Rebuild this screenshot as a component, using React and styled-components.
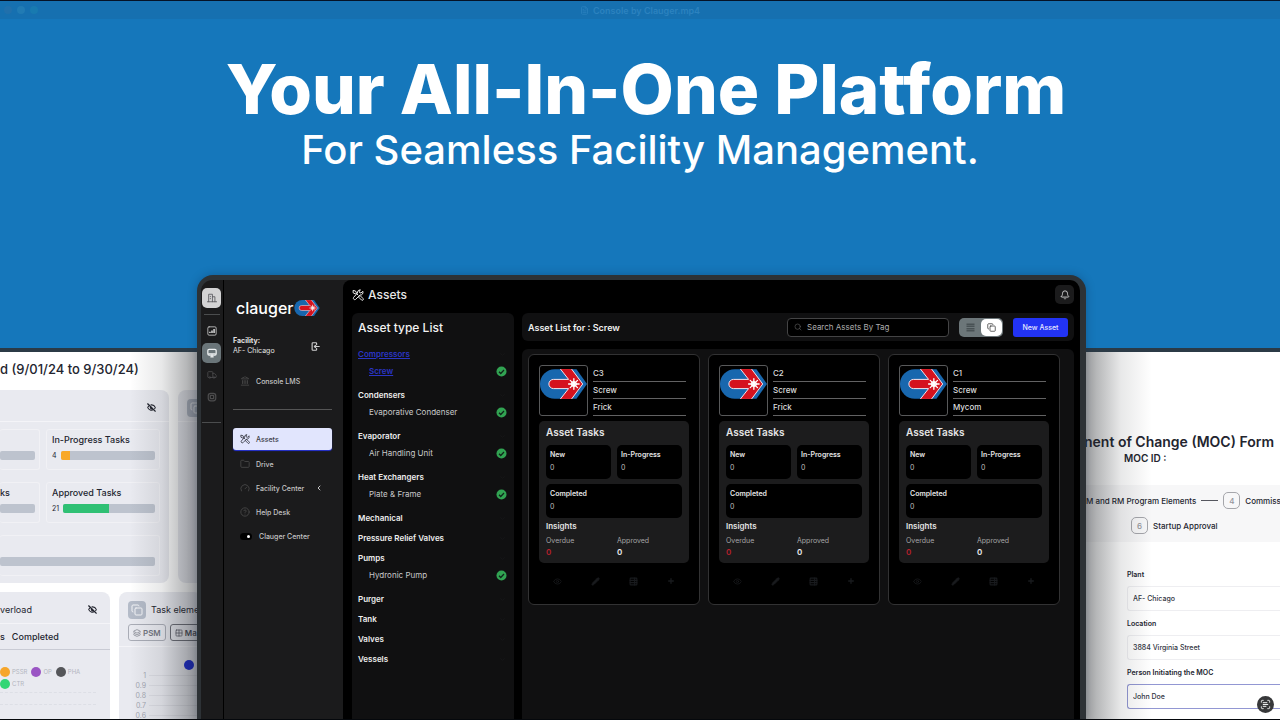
import React from "react";

import styled, { createGlobalStyle, css } from "styled-components";
import {
  Bell,
  ChevronDown,
  ChevronLeft,
  CircleHelp,
  Copy,
  Eye,
  EyeOff,
  FileText,
  Folder,
  Gauge,
  Grid2x2,
  Landmark,
  Layers,
  Pencil,
  Plus,
  ScanText,
  Search,
  TableProperties,
  Truck,
} from "lucide-react";

const GlobalStyle = createGlobalStyle`
  * {
    box-sizing: border-box;
  }

  body {
    margin: 0;
    font-family: Inter, "Liberation Sans", sans-serif;
  }

  button, input {
    font-family: inherit;
    margin: 0;
  }

  h1, h2, h3, h4, p, dl, dd, dt, ul {
    margin: 0;
    padding: 0;
    list-style: none;
  }

  svg {
    flex-shrink: 0;
  }
`;

const Page = styled.div`
  position: relative;
  display: flex;
  flex-direction: column;
  height: 100vh;
  overflow: hidden;
  background: #1577bb;
  border-top: 1px solid #051226;
  border-bottom: 1px solid #05080c;
`;

const TitleBar = styled.div`
  display: grid;
  grid-template-columns: 1fr auto 1fr;
  align-items: center;
  height: 18px;
  padding: 0 4px;
  background: #1670b0;
  color: #2c82bf;
  font-size: 9px;
  font-weight: 600;
`;

const Lights = styled.div`
  display: flex;
  gap: 5px;
`;

const Light = styled.span`
  width: 8px;
  height: 8px;
  border-radius: 50%;
  background: ${(props) => props.$color};
`;

const FileName = styled.div`
  display: flex;
  align-items: center;
  gap: 4px;
`;

const Hero = styled.header`
  flex: 0 0 256px;
  padding-top: 30px;
  text-align: center;
  color: #ffffff;
`;

const HeroTitle = styled.h1`
  padding-left: 12px;
  font-size: 69px;
  font-weight: 800;
  line-height: 80px;
  white-space: nowrap;
`;

const HeroSubtitle = styled.p`
  font-size: 40px;
  font-weight: 500;
  line-height: 42px;
  white-space: nowrap;
`;

const Stage = styled.div`
  flex: 1;
  min-height: 0;
  display: grid;
  grid-template-columns: 197fr 889fr 194fr;
`;

const Peek = styled.section`
  position: relative;
  min-width: 0;
  margin-top: 73px;
  overflow: hidden;
  background: #ffffff;
  border-top: 4px solid #2b3a46;
  color: #23252f;

  &::after {
    content: "";
    position: absolute;
    inset: 0;
    pointer-events: none;
    background: linear-gradient(
      to ${(props) => props.$shade},
      rgba(30, 34, 38, 0) 66%,
      rgba(30, 34, 38, 0.1) 82%,
      rgba(30, 34, 38, 0.42) 100%
    );
  }
`;

/* left screen */

const PeekHeading = styled.h2`
  padding: 8px 0 12px;
  font-size: 13px;
  font-weight: 500;
  line-height: 18px;
  white-space: nowrap;
`;

const PeekRow = styled.div`
  display: flex;
  gap: 9px;
  margin-bottom: 9px;
`;

const Tile = styled.article`
  flex: ${(props) => (props.$width ? `0 0 ${props.$width}px` : "1 0 78px")};
  min-height: ${(props) => props.$height}px;
  background: #e9eaf0;
  border-radius: ${(props) => (props.$open ? "0 8px 8px 0" : "8px")};
`;

const TileHead = styled.div`
  display: flex;
  align-items: center;
  justify-content: ${(props) => (props.$start ? "flex-start" : "space-between")};
  gap: 5px;
  height: ${(props) => props.$height}px;
  padding: 4px ${(props) => (props.$start ? 0 : 13)}px 0
    ${(props) => props.$left || 0}px;
  border-bottom: ${(props) => (props.$plain ? "0" : "1px solid #f4f4f8")};
  font-size: 9px;
  white-space: nowrap;
`;

const TileIcon = styled.span`
  display: flex;
  align-items: center;
  justify-content: center;
  width: 18px;
  height: 18px;
  flex-shrink: 0;
  border-radius: 4px;
  background: #b4bbc8;
  color: #f4f5f8;
`;

const StatGrid = styled.div`
  display: grid;
  grid-template-columns: 40px 1fr;
  gap: 12px 6px;
  padding: 7px 9px 0 0;
`;

const Stat = styled.div`
  grid-column: ${(props) => (props.$wide ? "1 / -1" : "auto")};
  height: 41px;
  padding: 3px 4px 0 ${(props) => (props.$cut ? 0 : 5)}px;
  border: 1px solid #f1f1f5;
  border-left-width: ${(props) => (props.$cut ? 0 : 1)}px;
  border-radius: 3px;
`;

const StatTitle = styled.h3`
  height: 14px;
  font-size: 9px;
  font-weight: 500;
  line-height: 14px;
  white-space: nowrap;
`;

const StatRow = styled.div`
  display: flex;
  align-items: center;
  gap: 4px;
  height: 16px;
  font-size: 7px;
`;

const Bar = styled.div`
  flex: 1;
  height: 9px;
  overflow: hidden;
  border-radius: 2px;
  background: #bdc3ce;
`;

const BarFill = styled.div`
  height: 100%;
  background: ${(props) => props.$color};
`;

const TabStrip = styled.div`
  display: flex;
  align-items: center;
  gap: 7px;
  height: 26px;
  border-bottom: 1px solid #c9cbd4;
  font-size: 9px;
  font-weight: 500;
`;

const Legend = styled.ul`
  display: flex;
  flex-wrap: wrap;
  gap: 2px 4px;
  padding: 17px 16px 0 0;
`;

const LegendItem = styled.li`
  display: flex;
  align-items: center;
  gap: 2px;
  color: #b3b6bf;
  font-size: 6px;
  line-height: 10px;
`;

const Dot = styled.span`
  width: 10px;
  height: 10px;
  flex-shrink: 0;
  border-radius: 50%;
  background: ${(props) => props.$color};
`;

const DashRule = styled.div`
  margin: 3px 14px 11px 0;
  border-top: 1px dashed #dddfe6;
`;

const Chips = styled.div`
  display: flex;
  gap: 4px;
  padding: 1px 0 5px 9px;
  border-bottom: 1px solid #f4f4f8;
`;

const Chip = styled.button`
  display: flex;
  align-items: center;
  gap: 2px;
  height: 17px;
  padding: 0 4px;
  border: 1px solid ${(props) => (props.$dark ? "#6d6f78" : "#a9acb6")};
  border-radius: 3px;
  background: transparent;
  color: ${(props) => (props.$dark ? "#4b4d57" : "#747782")};
  font-size: 8px;
  font-weight: 600;
`;

const ChartLegend = styled.div`
  display: flex;
  padding: 13px 0 0 65px;
`;

const AxisRow = styled.div`
  display: flex;
  align-items: center;
  gap: 3px;
  height: 10px;
  padding-left: 9px;
  color: #a5a8b2;
  font-size: 7px;

  span {
    width: 18px;
    text-align: right;
  }

  &::after {
    content: "";
    flex: 1;
    border-top: 1px solid #dcdde4;
  }
`;

/* right screen */

const FormTitle = styled.h2`
  display: flex;
  justify-content: flex-end;
  padding: 80px 6px 0 0;
  font-size: 14px;
  font-weight: 600;
  line-height: 20px;
  white-space: nowrap;
`;

const FormId = styled.p`
  padding-left: 38px;
  font-size: 10px;
  font-weight: 600;
  line-height: 12px;
`;

const Stepper = styled.div`
  margin-top: 21px;
  padding-top: 7px;
  height: 57px;
  background: #f7f7f8;
`;

const StepLine = styled.div`
  display: flex;
  align-items: center;
  gap: 5px;
  height: 17px;
  margin-bottom: 8px;
  padding-left: ${(props) => props.$left || 0}px;
  font-size: 8px;
  font-weight: 500;
  white-space: nowrap;
`;

const StepRule = styled.span`
  flex: 0 0 17px;
  height: 1px;
  background: #55575f;
`;

const StepNumber = styled.span`
  display: flex;
  align-items: center;
  justify-content: center;
  flex: 0 0 17px;
  height: 17px;
  border: 1px solid #a5a6ab;
  border-radius: 5px;
  color: #94959b;
`;

const Fields = styled.form`
  padding: 26px 0 0 41px;
`;

const Field = styled.label`
  display: block;
  margin-bottom: 6px;
  font-size: 7px;
  font-weight: 600;
  line-height: 14px;
`;

const FieldInput = styled.input`
  display: block;
  width: 100%;
  height: 25px;
  margin-top: 4px;
  padding: 0 5px;
  border: 1px solid ${(props) => (props.$active ? "#9297d3" : "#eeeef1")};
  border-right-width: 0;
  border-radius: 3px 0 0 3px;
  background: #ffffff;
  color: #33353f;
  font-size: 7px;
  font-weight: 500;
  outline: none;
`;

const ScanButton = styled.button`
  position: absolute;
  right: 6px;
  bottom: 6px;
  z-index: 2;
  display: flex;
  align-items: center;
  justify-content: center;
  width: 17px;
  height: 17px;
  padding: 0;
  border: 0;
  border-radius: 50%;
  background: #37383a;
  color: #ffffff;
`;

/* device */

const Device = styled.div`
  display: grid;
  grid-template-columns: 23px 119px minmax(0, 1fr);
  position: relative;
  z-index: 1;
  overflow: hidden;
  background: #1b1b1c;
  border: 0 solid #2d3236;
  border-width: 5px 6px 0 4px;
  border-radius: 16px 16px 0 0;
  box-shadow: 0 0 10px rgba(0, 20, 40, 0.25);
`;

const Rail = styled.nav`
  display: flex;
  flex-direction: column;
  align-items: center;
  padding: 8px 2px 0 1px;
  border-right: 1px solid #000000;
`;

const RailButton = styled.button`
  display: flex;
  align-items: center;
  justify-content: center;
  width: 19px;
  height: 20px;
  margin-bottom: 2px;
  padding: 0;
  border: 0;
  border-radius: 5px;
  background: ${(props) => props.$bg || "transparent"};
  color: ${(props) => props.$color};
`;

const RailRule = styled.div`
  width: ${(props) => props.$width}px;
  height: 1px;
  margin: ${(props) => props.$margin};
  background: #4b4d4e;
`;

const Sidebar = styled.aside`
  padding: 0 11px 0 9px;
`;

const Brand = styled.div`
  display: flex;
  align-items: center;
  gap: 1px;
  padding: 18px 0 0 3px;
  color: #ffffff;
  font-size: 16px;
  font-weight: 500;
  line-height: 20px;
`;

const Facility = styled.div`
  display: flex;
  align-items: center;
  justify-content: space-between;
  margin-bottom: 14px;
  padding: 18px 12px 0 0;
  color: #e2e2e2;
  font-size: 7px;
  line-height: 10px;
`;

const IconButton = styled.button`
  display: flex;
  padding: 0;
  border: 0;
  background: transparent;
  color: ${(props) => props.$color};
`;

const NavLink = styled.a`
  display: flex;
  align-items: center;
  gap: 6px;
  height: 22px;
  margin-bottom: 2px;
  padding: 0 9px 0 7px;
  border-radius: 3px;
  color: #c4c4c4;
  font-size: 7px;
  font-weight: 500;
  text-decoration: none;
  white-space: nowrap;

  svg:first-child {
    color: #4a4a4a;
  }

  svg:last-child {
    margin-left: auto;
  }

  ${(props) =>
    props.$active &&
    css`
      margin-bottom: 3px;
      background: #e1e5fd;
      box-shadow: 0 1px 1px #2733d8;
      color: #3c3d49;

      svg:first-child {
        color: #33343d;
        margin-left: 0;
      }
    `}
`;

const NavDivider = styled.div`
  height: 1px;
  margin: 17px 0 18px;
  background: #555555;
`;

const SwitchLabel = styled.label`
  display: flex;
  align-items: center;
  gap: 7px;
  height: 22px;
  padding-left: 7px;
  color: #c4c4c4;
  font-size: 7px;
  font-weight: 500;
`;

const SwitchInput = styled.input`
  appearance: none;
  display: flex;
  align-items: center;
  justify-content: flex-end;
  width: 12px;
  height: 7px;
  padding: 0 2px;
  border-radius: 4px;
  background: #000000;

  &::after {
    content: "";
    width: 3px;
    height: 3px;
    border-radius: 50%;
    background: #ffffff;
  }
`;

const Main = styled.main`
  display: flex;
  flex-direction: column;
  min-width: 0;
  padding: 0 6px 0 9px;
  background: #000000;
  border-radius: 8px 10px 0 0;
`;

const TopBar = styled.div`
  display: flex;
  align-items: center;
  gap: 4px;
  height: 29px;
  margin-bottom: 4px;
  color: #e6e6e6;
`;

const TopTitle = styled.h2`
  flex: 1;
  font-size: 12px;
  font-weight: 500;
  line-height: 16px;
`;

const BellButton = styled.button`
  display: flex;
  align-items: center;
  justify-content: center;
  width: 19px;
  height: 19px;
  padding: 0;
  border: 0;
  border-radius: 5px;
  background: #1b1b1c;
  color: #e6e6e6;
`;

const Columns = styled.div`
  flex: 1;
  display: grid;
  grid-template-columns: 162px minmax(0, 1fr);
  gap: 8px;
  min-height: 0;
`;

const TypePanel = styled.section`
  padding: 6px 6px 0;
  background: #101011;
  border-radius: 6px 6px 0 0;
`;

const TypeTitle = styled.h3`
  margin-bottom: 7px;
  color: #f2f2f2;
  font-size: 12px;
  font-weight: 500;
  line-height: 18px;
`;

const TypeHeader = styled.div`
  display: flex;
  align-items: center;
  justify-content: space-between;
  height: 20px;
  padding-right: 2px;
  color: ${(props) => (props.$active ? "#2b35c4" : "#eeeeee")};
  font-size: 8px;
  font-weight: 600;
  text-decoration: ${(props) => (props.$active ? "underline" : "none")};

  svg {
    color: #1c1c1d;
  }
`;

const TypeChild = styled.div`
  display: flex;
  align-items: center;
  justify-content: space-between;
  height: 14px;
  margin-bottom: 7px;
  padding: 0 1px 0 11px;
  color: ${(props) => (props.$active ? "#2b35c4" : "#c9c9c9")};
  font-size: 8px;
  font-weight: ${(props) => (props.$active ? 600 : 400)};
  text-decoration: ${(props) => (props.$active ? "underline" : "none")};
`;

const ListColumn = styled.section`
  display: flex;
  flex-direction: column;
  gap: 8px;
  min-width: 0;
`;

const ListHeader = styled.div`
  display: flex;
  align-items: center;
  gap: 10px;
  height: 28px;
  padding: 0 6px;
  background: #101011;
  border-radius: 6px;
`;

const ListTitle = styled.h3`
  flex: 1;
  color: #f0f0f0;
  font-size: 9px;
  font-weight: 600;
`;

const SearchBox = styled.label`
  display: flex;
  align-items: center;
  gap: 5px;
  width: 162px;
  height: 19px;
  padding: 0 6px;
  border: 1px solid #444445;
  border-radius: 4px;
  background: #000000;
  color: #5b5b5b;

  input {
    flex: 1;
    min-width: 0;
    padding: 0;
    border: 0;
    outline: none;
    background: transparent;
    color: #ffffff;
    font-size: 8px;
  }

  input::placeholder {
    color: #adadad;
  }
`;

const ViewToggle = styled.div`
  display: flex;
  height: 19px;
  padding: 1px;
  border-radius: 5px;
  background: #6c7679;
`;

const ViewButton = styled.button`
  display: flex;
  align-items: center;
  justify-content: center;
  width: 21px;
  padding: 0;
  border: 0;
  border-radius: 5px;
  background: ${(props) => (props.$on ? "#ffffff" : "transparent")};
  color: ${(props) => (props.$on ? "#333333" : "#485154")};
`;

const PrimaryButton = styled.button`
  width: 55px;
  height: 19px;
  padding: 0;
  border: 0;
  border-radius: 3px;
  background: #2233f5;
  color: #e6e8ff;
  font-size: 7px;
  font-weight: 500;
`;

const CardArea = styled.div`
  flex: 1;
  display: grid;
  grid-template-columns: repeat(3, minmax(0, 1fr));
  align-items: start;
  gap: 8px;
  padding: 5px 14px 0 6px;
  background: #101011;
  border-radius: 6px 6px 0 0;
`;

const Card = styled.article`
  padding: 10px 10px 18px;
  background: #000000;
  border: 1px solid #323233;
  border-radius: 6px;
`;

const CardTop = styled.div`
  display: flex;
  gap: 5px;
  margin-bottom: 5px;
  padding-right: 3px;
`;

const Thumb = styled.div`
  width: 49px;
  height: 51px;
  padding-top: 3px;
  border: 1px solid #58595a;
  border-radius: 3px;
`;

const Facts = styled.ul`
  flex: 1;
  display: grid;
  grid-template-rows: repeat(3, 1fr);
  color: #dcdcdc;
  font-size: 8px;
  font-weight: 500;

  li {
    display: flex;
    align-items: center;
    border-bottom: 1px solid #626263;
  }
`;

const Tasks = styled.div`
  padding: 4px 7px 5px;
  background: #1c1c1d;
  border-radius: 5px;
`;

const TasksTitle = styled.h4`
  margin-bottom: 6px;
  color: #e4e4e4;
  font-size: 10px;
  font-weight: 600;
  line-height: 14px;
`;

const TaskGrid = styled.div`
  display: grid;
  grid-template-columns: 1fr 1fr;
  gap: 5px 6px;
`;

const TaskBox = styled.div`
  grid-column: ${(props) => (props.$wide ? "1 / -1" : "auto")};
  height: 34px;
  padding: 3px 4px 0;
  background: #000000;
  border-radius: 5px;
  color: #bdbdbd;
  font-size: 7px;
  line-height: 14px;

  h5 {
    margin: 0;
    color: #e4e4e4;
    font-size: 7px;
    font-weight: 600;
    line-height: 13px;
  }
`;

const InsightsTitle = styled.h4`
  margin-top: 1px;
  color: #e4e4e4;
  font-size: 8px;
  font-weight: 600;
  line-height: 14px;
`;

const Insights = styled.dl`
  display: grid;
  grid-template-columns: 1fr 1fr;
  gap: 6px;
  padding-top: 2px;

  dt {
    color: #a5a5a6;
    font-size: 7px;
    line-height: 11px;
  }
`;

const InsightValue = styled.dd`
  color: ${(props) => (props.$alert ? "#b3202c" : "#ececec")};
  font-size: 8px;
  font-weight: 600;
  line-height: 12px;
`;

const CardActions = styled.div`
  display: flex;
  justify-content: space-between;
  padding: 14px 14px 0;
`;

const LogoMark = (props) => (
  <svg viewBox="0 0 143 90" {...props}>
    <path d="M45 0H111L143 45L111 90H45A45 45 0 0 1 45 0Z" fill="#1867ae" />
    <path
      d="M61 -2H95L130 45L95 92H61L87 59H41A14 14 0 0 1 41 31H87Z"
      fill="#d5121e"
      stroke="#f3e8ef"
      strokeWidth="3"
    />
    <g stroke="#ffffff" strokeWidth="4" strokeLinecap="round">
      <path d="M103 29V61M87 45H119M92 34L114 56M114 34L92 56" />
      <circle cx="103" cy="45" r="8" fill="none" strokeWidth="3" />
    </g>
  </svg>
);

const LineIcon = ({ size = 10, width = 2, children }) => (
  <svg
    width={size}
    height={size}
    viewBox="0 0 24 24"
    fill="none"
    stroke="currentColor"
    strokeWidth={width}
    strokeLinecap="round"
    strokeLinejoin="round"
  >
    {children}
  </svg>
);

const ToolsIcon = ({ size = 12 }) => (
  <LineIcon size={size}>
    <path d="M3 3l4 1 2 4-2 2-4-2zM9 9l3 3M14 15l2-2 6 6a2 2 0 0 1-3 3l-5-5z" />
    <path d="M21 5l-3 3-3-1-1-3 3-2a5 5 0 0 0-6 6L3 17a3 3 0 0 0 4 4l9-9a5 5 0 0 0 6-6z" />
  </LineIcon>
);

const TowerIcon = () => (
  <LineIcon>
    <path d="M4 21V3h9v18M13 9h6v12M1 21h22M8 8v1M8 13v1" />
  </LineIcon>
);

const ReportIcon = () => (
  <LineIcon>
    <rect x="2" y="2" width="20" height="20" rx="3" />
    <path d="M7 17v-3M12 17v-6M17 17V7" strokeWidth="4" strokeLinecap="butt" />
  </LineIcon>
);

const ScreenIcon = () => (
  <LineIcon width={3}>
    <rect x="2" y="3" width="20" height="14" rx="3" />
    <path d="M4 14h16M9 21h6M12 17v4" />
  </LineIcon>
);

const ChipIcon = () => (
  <LineIcon>
    <rect x="3" y="3" width="18" height="18" rx="6" strokeWidth="3" />
    <rect x="8" y="8" width="8" height="8" rx="1" strokeWidth="3" />
  </LineIcon>
);

const ExitIcon = () => (
  <LineIcon size={9} width={3}>
    <path d="M15 7V4a2 2 0 0 0-2-2H5a2 2 0 0 0-2 2v16a2 2 0 0 0 2 2h8a2 2 0 0 0 2-2v-3M22 12H9M12 9l-3 3 3 3" />
  </LineIcon>
);

const CheckBadge = () => (
  <svg width="11" height="11" viewBox="0 0 22 22">
    <circle cx="11" cy="11" r="10" fill="#31a352" />
    <path
      d="M6 11.500l3.500 3.500L16 8"
      fill="none"
      stroke="#10251a"
      strokeWidth="2.500"
    />
  </svg>
);

const ListIcon = () => (
  <svg width="9" height="9" viewBox="0 0 18 18" fill="currentColor">
    <path d="M1 1h16v3H1zM1 5h16v3H1zM1 10h16v3H1zM1 14h16v3H1z" />
  </svg>
);

const assetTypes = [
  { name: "Compressors", child: "Screw", active: true },
  { name: "Condensers", child: "Evaporative Condenser" },
  { name: "Evaporator", child: "Air Handling Unit" },
  { name: "Heat Exchangers", child: "Plate & Frame" },
  { name: "Mechanical" },
  { name: "Pressure Relief Valves" },
  { name: "Pumps", child: "Hydronic Pump" },
  { name: "Purger" },
  { name: "Tank" },
  { name: "Valves" },
  { name: "Vessels" },
];

const assets = [
  { tag: "C3", type: "Screw", maker: "Frick" },
  { tag: "C2", type: "Screw", maker: "Frick" },
  { tag: "C1", type: "Screw", maker: "Mycom" },
];

const legend = [
  { label: "PSSR", color: "#f6a62b" },
  { label: "OP", color: "#9a55c4" },
  { label: "PHA", color: "#55565a" },
  { label: "CTR", color: "#33d675" },
];

const Progress = ({ title, count, percent = 0, color, cut, wide }) => (
  <Stat $cut={cut} $wide={wide}>
    <StatTitle>{title}</StatTitle>
    <StatRow>
      {count}
      <Bar>
        <BarFill $color={color} style={{ width: `${percent}%` }} />
      </Bar>
    </StatRow>
  </Stat>
);

const DashboardPeek = () => (
  <Peek $shade="right">
    <PeekHeading>d (9/01/24 to 9/30/24)</PeekHeading>
    <PeekRow>
      <Tile $width={169} $height={193} $open>
        <TileHead $height={32}>
          <span />
          <EyeOff size={9} strokeWidth={3} />
        </TileHead>
        <StatGrid>
          <Progress cut />
          <Progress
            title="In-Progress Tasks"
            count={4}
            percent={10}
            color="#f8a827"
          />
          <Progress title="ks" cut />
          <Progress
            title="Approved Tasks"
            count={21}
            percent={50}
            color="#2fc074"
          />
          <Progress cut wide />
        </StatGrid>
      </Tile>
      <Tile $height={193}>
        <TileHead $height={32} $left={9} $start>
          <TileIcon>
            <Copy size={12} />
          </TileIcon>
        </TileHead>
      </Tile>
    </PeekRow>
    <PeekRow>
      <Tile $width={110} $height={140} $open>
        <TileHead $height={32}>
          verload
          <EyeOff size={9} strokeWidth={3} />
        </TileHead>
        <TabStrip>
          <span>s</span>
          <span>Completed</span>
        </TabStrip>
        <Legend>
          {legend.map((item) => (
            <LegendItem key={item.label}>
              <Dot $color={item.color} />
              {item.label}
            </LegendItem>
          ))}
        </Legend>
        <DashRule />
        <DashRule />
      </Tile>
      <Tile $height={140}>
        <TileHead $height={31} $left={9} $start $plain>
          <TileIcon>
            <Copy size={12} />
          </TileIcon>
          Task eleme
        </TileHead>
        <Chips>
          <Chip type="button">
            <Layers size={8} />
            PSM
          </Chip>
          <Chip type="button" $dark>
            <Grid2x2 size={8} />
            Ma
          </Chip>
        </Chips>
        <ChartLegend>
          <Dot $color="#1a2bd8" />
        </ChartLegend>
        {["1", "0.9", "0.8", "0.7", "0.6"].map((tick) => (
          <AxisRow key={tick}>
            <span>{tick}</span>
          </AxisRow>
        ))}
      </Tile>
    </PeekRow>
  </Peek>
);

const MocPeek = () => (
  <Peek $shade="left">
    <FormTitle>nent of Change (MOC) Form</FormTitle>
    <FormId>MOC ID :</FormId>
    <Stepper>
      <StepLine>
        M and RM Program Elements
        <StepRule />
        <StepNumber>4</StepNumber>
        Commissi
      </StepLine>
      <StepLine $left={45}>
        <StepNumber>6</StepNumber>
        Startup Approval
      </StepLine>
    </Stepper>
    <Fields>
      <Field>
        Plant
        <FieldInput type="text" defaultValue="AF- Chicago" />
      </Field>
      <Field>
        Location
        <FieldInput type="text" defaultValue="3884 Virginia Street" />
      </Field>
      <Field>
        Person Initiating the MOC
        <FieldInput type="text" defaultValue="John Doe" $active />
      </Field>
    </Fields>
    <ScanButton type="button" aria-label="Scan text">
      <ScanText size={11} />
    </ScanButton>
  </Peek>
);

const AssetCard = ({ asset }) => (
  <Card>
    <CardTop>
      <Thumb>
        <LogoMark width="47" height="30" />
      </Thumb>
      <Facts>
        <li>{asset.tag}</li>
        <li>{asset.type}</li>
        <li>{asset.maker}</li>
      </Facts>
    </CardTop>
    <Tasks>
      <TasksTitle>Asset Tasks</TasksTitle>
      <TaskGrid>
        <TaskBox>
          <h5>New</h5>0
        </TaskBox>
        <TaskBox>
          <h5>In-Progress</h5>0
        </TaskBox>
        <TaskBox $wide>
          <h5>Completed</h5>0
        </TaskBox>
      </TaskGrid>
      <InsightsTitle>Insights</InsightsTitle>
      <Insights>
        <div>
          <dt>Overdue</dt>
          <InsightValue $alert>0</InsightValue>
        </div>
        <div>
          <dt>Approved</dt>
          <InsightValue>0</InsightValue>
        </div>
      </Insights>
    </Tasks>
    <CardActions>
      <IconButton type="button" aria-label="View" $color="#191b1e">
        <Eye size={9} />
      </IconButton>
      <IconButton type="button" aria-label="Edit" $color="#191b1e">
        <Pencil size={9} fill="currentColor" />
      </IconButton>
      <IconButton type="button" aria-label="Details" $color="#191b1e">
        <TableProperties size={9} strokeWidth={3} />
      </IconButton>
      <IconButton type="button" aria-label="Add" $color="#191b1e">
        <Plus size={8} strokeWidth={4} />
      </IconButton>
    </CardActions>
  </Card>
);

const App = () => (
  <>
    <GlobalStyle />
    <Page>
      <TitleBar>
        <Lights>
          <Light $color="#2170ac" />
          <Light $color="#217bb4" />
          <Light $color="#187ab0" />
        </Lights>
        <FileName>
          <FileText size={9} />
          Console by Clauger.mp4
        </FileName>
      </TitleBar>
      <Hero>
        <HeroTitle>Your All-In-One Platform</HeroTitle>
        <HeroSubtitle>For Seamless Facility Management.</HeroSubtitle>
      </Hero>
      <Stage>
        <DashboardPeek />
        <Device>
          <Rail>
            <RailButton aria-label="Facilities" $bg="#d3d3d4" $color="#55565a">
              <TowerIcon />
            </RailButton>
            <RailRule $width={16} $margin="4px 0 6px" />
            <RailButton aria-label="Reports" $color="#c9c9c9">
              <ReportIcon />
            </RailButton>
            <RailButton aria-label="Console" $bg="#6a7579" $color="#eef1f2">
              <ScreenIcon />
            </RailButton>
            <RailButton aria-label="Deliveries" $color="#4c4c4d">
              <Truck size={10} />
            </RailButton>
            <RailButton aria-label="Devices" $color="#4c4c4d">
              <ChipIcon />
            </RailButton>
            <RailRule $width={19} $margin="13px 0 0" />
          </Rail>
          <Sidebar>
            <Brand>
              clauger
              <LogoMark width="26" height="16" />
            </Brand>
            <Facility>
              <div>
                <strong>Facility:</strong>
                <div>AF- Chicago</div>
              </div>
              <IconButton aria-label="Change facility" $color="#cfcfcf">
                <ExitIcon />
              </IconButton>
            </Facility>
            <NavLink href="#lms">
              <Landmark size={10} />
              <span>Console LMS</span>
            </NavLink>
            <NavDivider />
            <NavLink href="#assets" $active>
              <ToolsIcon size={10} />
              <span>Assets</span>
            </NavLink>
            <NavLink href="#drive">
              <Folder size={10} />
              <span>Drive</span>
            </NavLink>
            <NavLink href="#facility">
              <Gauge size={10} />
              <span>Facility Center</span>
              <ChevronLeft size={8} strokeWidth={3} />
            </NavLink>
            <NavLink href="#help">
              <CircleHelp size={10} />
              <span>Help Desk</span>
            </NavLink>
            <SwitchLabel>
              <SwitchInput type="checkbox" role="switch" defaultChecked />
              Clauger Center
            </SwitchLabel>
          </Sidebar>
          <Main>
            <TopBar>
              <ToolsIcon />
              <TopTitle>Assets</TopTitle>
              <BellButton aria-label="Notifications">
                <Bell size={10} />
              </BellButton>
            </TopBar>
            <Columns>
              <TypePanel>
                <TypeTitle>Asset type List</TypeTitle>
                {assetTypes.map((type) => (
                  <React.Fragment key={type.name}>
                    <TypeHeader $active={type.active}>
                      {type.name}
                      <ChevronDown size={7} />
                    </TypeHeader>
                    {type.child && (
                      <TypeChild $active={type.active}>
                        {type.child}
                        <CheckBadge />
                      </TypeChild>
                    )}
                  </React.Fragment>
                ))}
              </TypePanel>
              <ListColumn>
                <ListHeader>
                  <ListTitle>Asset List for : Screw</ListTitle>
                  <SearchBox>
                    <Search size={8} />
                    <input
                      type="text"
                      aria-label="Search assets"
                      placeholder="Search Assets By Tag"
                    />
                  </SearchBox>
                  <ViewToggle>
                    <ViewButton aria-label="List view">
                      <ListIcon />
                    </ViewButton>
                    <ViewButton aria-label="Card view" $on>
                      <Copy size={9} />
                    </ViewButton>
                  </ViewToggle>
                  <PrimaryButton>New Asset</PrimaryButton>
                </ListHeader>
                <CardArea>
                  {assets.map((asset) => (
                    <AssetCard key={asset.tag} asset={asset} />
                  ))}
                </CardArea>
              </ListColumn>
            </Columns>
          </Main>
        </Device>
        <MocPeek />
      </Stage>
    </Page>
  </>
);

export default App;
